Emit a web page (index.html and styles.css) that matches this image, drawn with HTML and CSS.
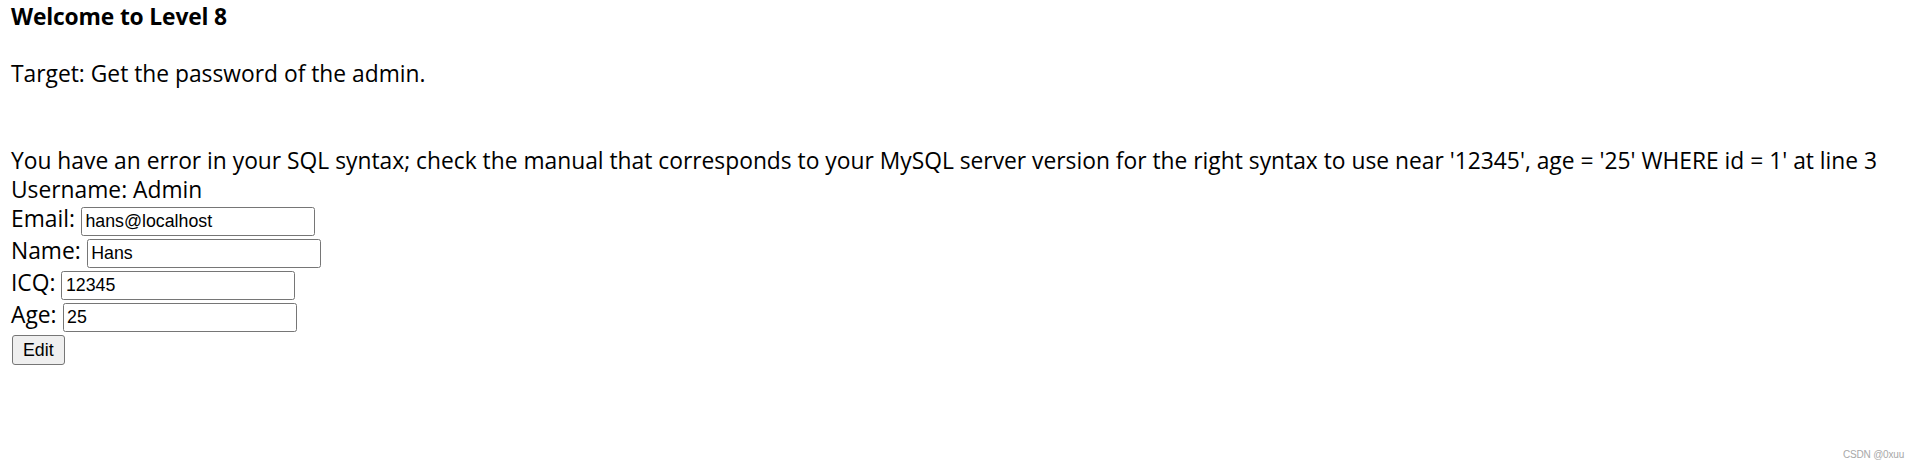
FILE: index.html
```html
<!DOCTYPE html>
<html lang="en">
<head>
<meta charset="utf-8">
<title>Level 8</title>
<link rel="stylesheet" href="styles.css">
</head>
<body>
<main class="page">
  <p class="line title">Welcome to Level 8</p>
  <p class="line target">Target: Get the password of the admin.</p>
  <p class="line error">You have an error in your SQL syntax; check the manual that corresponds to your MySQL server version for the right syntax to use near '12345', age = '25' WHERE id = 1' at line 3</p>
  <p class="line">Username: Admin</p>
  <form class="edit-form" onsubmit="return false">
    <div class="row">Email: <input class="field" type="text" value="hans@localhost"></div>
    <div class="row">Name: <input class="field" type="text" value="Hans"></div>
    <div class="row">ICQ: <input class="field" type="text" value="12345"></div>
    <div class="row">Age: <input class="field" type="text" value="25"></div>
    <button class="btn" type="submit">Edit</button>
  </form>
</main>
<div class="watermark">CSDN @0xuu</div>
</body>
</html>
```

FILE: styles.css
```css
html, body {
  margin: 0;
  padding: 0;
  background: #ffffff;
}

body {
  width: 1920px;
  height: 470px;
  position: relative;
  overflow: hidden;
  color: #000000;
  font-family: "Open Sans", "Noto Sans", sans-serif;
  font-size: 22.8px;
}

.page {
  padding: 1.8px 0 0 11px;
}

.line {
  margin: 0;
  line-height: 29px;
  white-space: nowrap;
}

.title {
  font-weight: 700;
  letter-spacing: -0.15px;
}

.target {
  margin-top: 28px;
}

.error {
  margin-top: 58px;
}

.edit-form {
  margin: 0;
  padding-top: 0.3px;
}

.row {
  height: 32px;
  line-height: 29px;
  white-space: nowrap;
}

.field {
  box-sizing: border-box;
  width: 234px;
  height: 29px;
  margin: 0;
  padding: 3.4px 3px 3.4px 3.5px;
  border: 1px solid #767676;
  border-radius: 2.5px;
  background: #ffffff;
  color: #000000;
  font-family: "Liberation Sans", Arial, sans-serif;
  font-size: 17.8px;
  line-height: 20px;
  vertical-align: baseline;
  outline: none;
}

.btn {
  display: block;
  box-sizing: border-box;
  height: 30px;
  margin: 2.5px 0 0 0.5px;
  padding: 0 10.5px;
  border: 1px solid #767676;
  border-radius: 3px;
  background: #efefef;
  color: #000000;
  font-family: "Liberation Sans", Arial, sans-serif;
  font-size: 17.8px;
  line-height: 28px;
}

.watermark {
  position: absolute;
  right: 16px;
  bottom: 9px;
  font-family: "Liberation Sans", Arial, sans-serif;
  font-size: 10px;
  line-height: 12px;
  color: #a8a8a8;
  letter-spacing: -0.2px;
}
```
